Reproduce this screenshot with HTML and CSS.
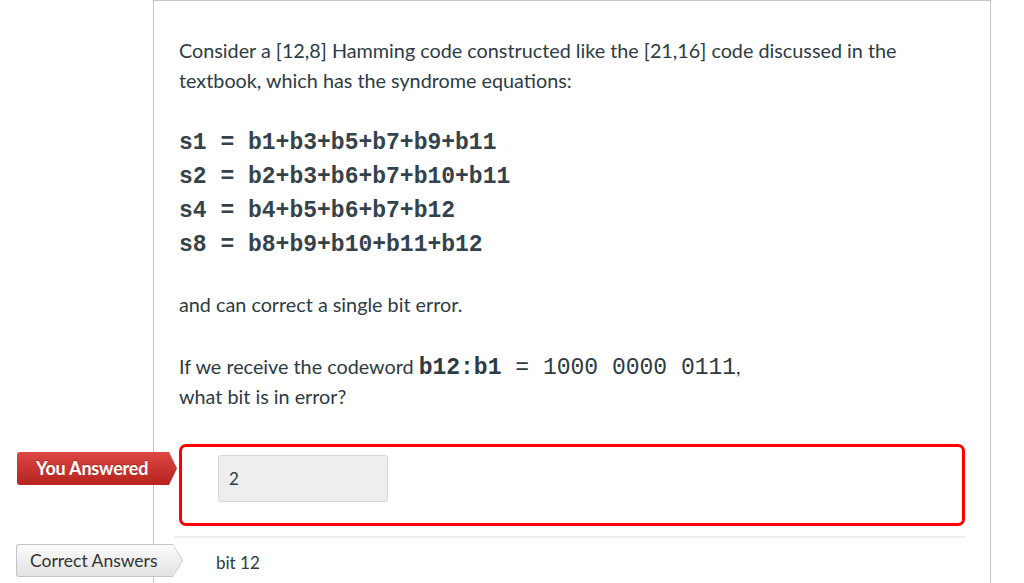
FILE: index.html
```html
<!DOCTYPE html>
<html lang="en">
<head>
<meta charset="utf-8">
<title>Quiz question</title>
<link rel="stylesheet" href="styles.css">
</head>
<body>
<div class="page">
  <div class="gutter"></div>
  <div class="card">
    <div class="question">
      <p>Consider a [12,8] Hamming code constructed like the [21,16] code discussed in the textbook, which has the syndrome equations:</p>
      <pre class="eqs">s1 = b1+b3+b5+b7+b9+b11
s2 = b2+b3+b6+b7+b10+b11
s4 = b4+b5+b6+b7+b12
s8 = b8+b9+b10+b11+b12</pre>
      <p class="mid">and can correct a single bit error.</p>
      <p class="last">If we receive the codeword <code class="strong">b12:b1</code><code> = 1000 0000 0111</code>,<br>what bit is in error?</p>
    </div>
    <div class="answers">
      <div class="answer wrong">
        <span class="badge badge-red">You Answered</span>
        <div class="input-box">2</div>
      </div>
      <div class="sep"></div>
      <div class="answer correct">
        <span class="badge badge-grey">Correct Answers</span>
        <span class="correct-text">bit 12</span>
      </div>
    </div>
  </div>
</div>
</body>
</html>
```

FILE: styles.css
```css
html, body {
  margin: 0;
  padding: 0;
  background: #fff;
  overflow: hidden;
}
body {
  font-family: Lato, "Open Sans", sans-serif;
  color: #2d3b45;
}
.page {
  display: flex;
  width: 1024px;
  height: 583px;
}
.gutter {
  flex: none;
  width: 153px;
}
.card {
  flex: none;
  width: 838px;
  box-sizing: border-box;
  min-height: 640px;
  border: 1px solid #c4c8cb;
  border-bottom: none;
  padding: 34px 25px 0;
}
.question p {
  margin: 0;
  font-size: 19.8px;
  line-height: 30px;
}
.question .eqs {
  margin: 31px 0 0;
  font-family: "Liberation Mono", "Courier New", monospace;
  font-weight: bold;
  font-size: 23px;
  line-height: 34px;
  color: #34424c;
}
.question .mid {
  margin-top: 27px;
}
.question .last {
  margin-top: 32px;
}
.question code {
  font-family: "Liberation Mono", "Courier New", monospace;
  font-size: 23px;
  line-height: 20px;
}
.question code.strong {
  font-weight: bold;
}
.answers {
  margin-top: 33px;
}
.answer {
  position: relative;
}
.answer.wrong {
  border: 3px solid #ff0000;
  border-radius: 7px;
  padding: 8px 36px 21px;
}
.input-box {
  width: 170px;
  height: 47px;
  box-sizing: border-box;
  background: #eeeeee;
  border: 1px solid #d6d6d6;
  border-radius: 3px;
  padding-left: 10px;
  font-size: 17px;
  line-height: 45px;
  color: #2d3b45;
}
.sep {
  margin: 10px 0 0 -4px;
  height: 2px;
  background: #ececec;
}
.answer.correct {
  padding: 13px 0 0 37px;
  font-size: 17px;
  line-height: 24px;
}
.badge {
  position: absolute;
  height: 33px;
  box-sizing: border-box;
  font-size: 17.5px;
  line-height: 33px;
  white-space: nowrap;
}
.badge::before,
.badge::after {
  content: "";
  position: absolute;
  top: 0;
  bottom: 0;
}
.badge-red {
  left: -165px;
  top: 5px;
  width: 152px;
  padding-left: 19px;
  color: #fff;
  font-size: 18px;
  font-weight: bold;
  letter-spacing: -0.2px;
  background: linear-gradient(#dc4643, #b7231f);
  border-radius: 3px 0 0 3px;
  text-shadow: 0 -1px 0 rgba(0, 0, 0, 0.2);
}
.badge-red::after {
  right: -8px;
  width: 8px;
  background: linear-gradient(#dc4643, #b7231f);
  clip-path: polygon(0 0, 100% 50%, 0 100%);
}
.badge-grey {
  left: -163px;
  top: 6px;
  width: 157px;
  padding-left: 13px;
  color: #333;
  background: linear-gradient(#fbfbfb, #e2e2e2);
  border: 1px solid #c4c4c4;
  border-right: none;
  border-radius: 3px 0 0 3px;
  line-height: 31px;
}
.badge-grey::before {
  top: -1px;
  bottom: -1px;
  right: -10px;
  width: 10px;
  background: #c4c4c4;
  clip-path: polygon(0 0, 100% 50%, 0 100%);
}
.badge-grey::after {
  right: -9px;
  width: 9px;
  background: linear-gradient(#fbfbfb, #e2e2e2);
  clip-path: polygon(0 0, 100% 50%, 0 100%);
}
.correct-text {
  color: #2d3b45;
}
```
